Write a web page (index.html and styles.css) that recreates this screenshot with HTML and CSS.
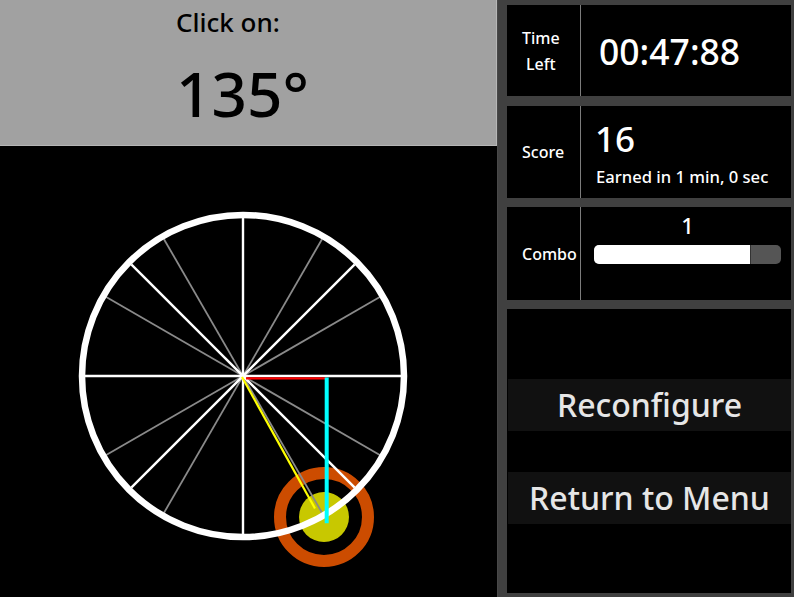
FILE: index.html
```html
<!DOCTYPE html>
<html>
<head>
<meta charset="utf-8">
<link rel="stylesheet" href="styles.css">
</head>
<body>
<div class="app">
  <div class="left">
    <div class="prompt">
      <div class="prompt-label">Click on:</div>
      <div class="prompt-angle">135°</div>
    </div>
    <svg class="dial" width="497" height="451" viewBox="0 0 497 451">
      <circle cx="324" cy="371" r="44" fill="none" stroke="#cc4c00" stroke-width="12"/>
      <circle cx="324" cy="371" r="25" fill="#c8c800"/>
      <g stroke="#8a8a8a" stroke-width="1.8">
        <line x1="106.2" y1="151" x2="379.8" y2="309"/>
        <line x1="106.2" y1="309" x2="379.8" y2="151"/>
        <line x1="164" y1="93.2" x2="322" y2="366.8"/>
        <line x1="164" y1="366.8" x2="322" y2="93.2"/>
      </g>
      <g stroke="#ffffff" stroke-width="2.4">
        <line x1="85" y1="230" x2="401" y2="230"/>
        <line x1="243" y1="72" x2="243" y2="388"/>
        <line x1="131.3" y1="118.3" x2="354.7" y2="341.7"/>
        <line x1="131.3" y1="341.7" x2="354.7" y2="118.3"/>
      </g>
      <circle cx="243" cy="230" r="161" fill="none" stroke="#ffffff" stroke-width="6.5"/>
      <line x1="242" y1="231" x2="315" y2="362.5" stroke="#ffff00" stroke-width="2.2"/>
      <line x1="246" y1="232.3" x2="327" y2="232.3" stroke="#ff0000" stroke-width="2.2"/>
      <line x1="326.7" y1="231.5" x2="326.7" y2="377.3" stroke="#00ffff" stroke-width="4"/>
    </svg>
  </div>
  <div class="side">
    <div class="card card-time">
      <div class="card-label"><span class="label-text">Time<br>Left</span></div>
      <div class="card-value">
        <div class="big time-value">00:47:88</div>
      </div>
    </div>
    <div class="card card-score">
      <div class="card-label"><span class="label-text">Score</span></div>
      <div class="card-value score-value">
        <div class="big">16</div>
        <div class="sub">Earned in 1 min, 0 sec</div>
      </div>
    </div>
    <div class="card card-combo">
      <div class="card-label"><span class="label-text">Combo</span></div>
      <div class="card-value combo-value">
        <div class="combo-num">1</div>
        <div class="bar"><div class="bar-fill" style="width: 83.7%"></div></div>
      </div>
    </div>
    <div class="card actions">
      <div class="btn">Reconfigure</div>
      <div class="btn">Return to Menu</div>
    </div>
  </div>
</div>
</body>
</html>
```

FILE: styles.css
```css
html, body {
  margin: 0;
  padding: 0;
  background: #000;
  overflow: hidden;
}

body {
  font-family: "Noto Sans", "Open Sans", sans-serif;
  font-weight: 500;
  width: 794px;
  height: 597px;
}

.app {
  display: flex;
  width: 794px;
  height: 597px;
}

.left {
  width: 497px;
  display: flex;
  flex-direction: column;
  background: #000;
}

.prompt {
  height: 146px;
  box-sizing: border-box;
  background: #a1a1a1;
  border-right: 1px solid #b6b6b6;
  border-bottom: 1px solid #b6b6b6;
  padding: 5px 0 0 176px;
  color: #000;
}

.prompt-label {
  font-size: 26px;
  line-height: 34px;
}

.prompt-angle {
  font-size: 62px;
  line-height: 70px;
  margin-top: 19px;
}

.dial {
  display: block;
}

.side {
  width: 297px;
  box-sizing: border-box;
  background: #404040;
  border-left: 1px solid #484848;
  padding: 5px 3px 4px 9px;
  display: flex;
  flex-direction: column;
  gap: 9px;
}

.card {
  background: #000;
  display: flex;
  color: #fff;
}

.card-time { height: 91px; flex: none; }
.card-score { height: 92px; flex: none; margin-top: 1px; }
.card-combo { height: 93px; flex: none; }

.card-label {
  width: 74px;
  flex: none;
  box-sizing: border-box;
  border-right: 1px solid #7c7c7c;
  padding-left: 15px;
  display: flex;
  align-items: center;
}

.label-text {
  font-size: 16px;
  line-height: 26px;
  text-align: center;
}

.card-value {
  flex: 1;
  display: flex;
  flex-direction: column;
  justify-content: center;
  padding-left: 15px;
}

.big {
  font-size: 35px;
  line-height: 40px;
}

.time-value {
  font-size: 35.5px;
  margin-left: 3px;
}

.score-value {
  justify-content: flex-start;
  padding-top: 13px;
}

.score-value .big {
  margin-left: -1px;
}

.sub {
  font-size: 16.6px;
  line-height: 22px;
  margin-top: 7px;
}

.combo-value {
  justify-content: flex-start;
  padding: 3px 10px 0 13px;
}

.combo-num {
  font-size: 22px;
  line-height: 30px;
  text-align: center;
}

.bar {
  margin-top: 5px;
  height: 19px;
  border-radius: 5px;
  background: #555;
  overflow: hidden;
}

.bar-fill {
  height: 100%;
  background: #fff;
  border-right: 1px solid #333;
  box-sizing: border-box;
}

.actions {
  flex: 1;
  flex-direction: column;
  justify-content: center;
  gap: 41px;
  padding-left: 1px;
}

.btn {
  height: 52px;
  background: #111;
  color: #e6e6e6;
  font-size: 32px;
  line-height: 52px;
  text-align: center;
}
```
